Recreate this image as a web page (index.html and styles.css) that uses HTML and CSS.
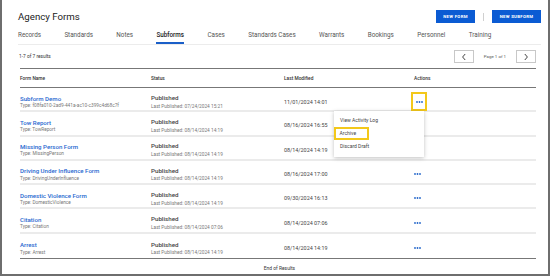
FILE: index.html
```html
<!DOCTYPE html>
<html>
<head>
<meta charset="utf-8">
<link rel="stylesheet" href="styles.css">
</head>
<body>
<div class="frame">
  <header class="top">
    <h1 class="title">Agency Forms</h1>
    <div class="btns">
      <button class="btn b1">NEW FORM</button>
      <span class="sep"></span>
      <button class="btn b2">NEW SUBFORM</button>
    </div>
  </header>
  <nav class="tabs">
    <span class="tab">Records</span>
    <span class="tab">Standards</span>
    <span class="tab">Notes</span>
    <span class="tab active">Subforms</span>
    <span class="tab">Cases</span>
    <span class="tab">Standards Cases</span>
    <span class="tab">Warrants</span>
    <span class="tab">Bookings</span>
    <span class="tab">Personnel</span>
    <span class="tab">Training</span>
  </nav>
  <div class="bar">
    <span class="count">1-7 of 7 results</span>
    <div class="pager">
      <span class="pbtn"><svg width="8" height="8" viewBox="0 0 8 8"><path d="M5.2 1 L2.6 4 L5.2 7" fill="none" stroke="#444" stroke-width="1"/></svg></span>
      <span class="ptext">Page 1 of 1</span>
      <span class="pbtn"><svg width="8" height="8" viewBox="0 0 8 8"><path d="M2.8 1 L5.4 4 L2.8 7" fill="none" stroke="#444" stroke-width="1"/></svg></span>
    </div>
  </div>
  <div class="table">
    <div class="row head">
      <span>Form Name</span><span>Status</span><span>Last Modified</span><span>Actions</span>
    </div>
    <div class="row">
      <div><div class="name">Subform Demo</div><div class="sub">Type: f08fa010-2ad9-441a-ac10-c399c4d68c7f</div></div>
      <div><div class="st">Published</div><div class="sub">Last Published: 07/24/2024 15:21</div></div>
      <div class="mod">11/01/2024 14:01</div>
      <div class="act">
        <span class="dotsbox"><svg class="dots" width="7" height="2" viewBox="0 0 7 2"><circle cx="1" cy="1" r="0.9"/><circle cx="3.5" cy="1" r="0.9"/><circle cx="6" cy="1" r="0.9"/></svg></span>
        <div class="menu">
          <div class="mi">View Activity Log</div>
          <div class="mi sel">Archive</div>
          <div class="mi">Discard Draft</div>
        </div>
      </div>
    </div>
    <div class="row">
      <div><div class="name">Tow Report</div><div class="sub">Type: TowReport</div></div>
      <div><div class="st">Published</div><div class="sub">Last Published: 08/14/2024 14:19</div></div>
      <div class="mod">08/16/2024 16:55</div>
      <div class="act"><svg class="dots" width="7" height="2" viewBox="0 0 7 2"><circle cx="1" cy="1" r="0.9"/><circle cx="3.5" cy="1" r="0.9"/><circle cx="6" cy="1" r="0.9"/></svg></div>
    </div>
    <div class="row">
      <div><div class="name">Missing Person Form</div><div class="sub">Type: MissingPerson</div></div>
      <div><div class="st">Published</div><div class="sub">Last Published: 08/14/2024 14:19</div></div>
      <div class="mod">08/14/2024 14:19</div>
      <div class="act"><svg class="dots" width="7" height="2" viewBox="0 0 7 2"><circle cx="1" cy="1" r="0.9"/><circle cx="3.5" cy="1" r="0.9"/><circle cx="6" cy="1" r="0.9"/></svg></div>
    </div>
    <div class="row">
      <div><div class="name">Driving Under Influence Form</div><div class="sub">Type: DrivingUnderInfluence</div></div>
      <div><div class="st">Published</div><div class="sub">Last Published: 08/14/2024 14:19</div></div>
      <div class="mod">08/16/2024 17:00</div>
      <div class="act"><svg class="dots" width="7" height="2" viewBox="0 0 7 2"><circle cx="1" cy="1" r="0.9"/><circle cx="3.5" cy="1" r="0.9"/><circle cx="6" cy="1" r="0.9"/></svg></div>
    </div>
    <div class="row">
      <div><div class="name">Domestic Violence Form</div><div class="sub">Type: DomesticViolence</div></div>
      <div><div class="st">Published</div><div class="sub">Last Published: 08/14/2024 14:19</div></div>
      <div class="mod">09/30/2024 16:13</div>
      <div class="act"><svg class="dots" width="7" height="2" viewBox="0 0 7 2"><circle cx="1" cy="1" r="0.9"/><circle cx="3.5" cy="1" r="0.9"/><circle cx="6" cy="1" r="0.9"/></svg></div>
    </div>
    <div class="row">
      <div><div class="name">Citation</div><div class="sub">Type: Citation</div></div>
      <div><div class="st">Published</div><div class="sub">Last Published: 08/14/2024 07:06</div></div>
      <div class="mod">08/14/2024 07:06</div>
      <div class="act"><svg class="dots" width="7" height="2" viewBox="0 0 7 2"><circle cx="1" cy="1" r="0.9"/><circle cx="3.5" cy="1" r="0.9"/><circle cx="6" cy="1" r="0.9"/></svg></div>
    </div>
    <div class="row last">
      <div><div class="name">Arrest</div><div class="sub">Type: Arrest</div></div>
      <div><div class="st">Published</div><div class="sub">Last Published: 08/14/2024 14:19</div></div>
      <div class="mod">08/14/2024 14:19</div>
      <div class="act"><svg class="dots" width="7" height="2" viewBox="0 0 7 2"><circle cx="1" cy="1" r="0.9"/><circle cx="3.5" cy="1" r="0.9"/><circle cx="6" cy="1" r="0.9"/></svg></div>
    </div>
  </div>
  <div class="end">End of Results</div>
</div>
</body>
</html>
```
FILE: styles.css
```css
* { box-sizing: border-box; }
html, body { margin: 0; padding: 0; background: #fff; }
body { font-family: Roboto, "Liberation Sans", sans-serif; color: #333; }
.frame {
  width: 550px; height: 276px;
  border-left: 2px solid #6e6e6e;
  border-right: 2px solid #6e6e6e;
  border-bottom: 2px solid #6e6e6e;
  padding: 0 7px 0 16px;
  overflow: hidden;
}
.top { display: flex; justify-content: space-between; align-items: center; height: 28px; padding-top: 5px; }
.title { font-size: 9.7px; font-weight: 400; margin: 0; color: #222; }
.btns { display: flex; align-items: center; }
.btn {
  background: #0b5bd3; color: #fff; border: 0; font-family: inherit;
  font-size: 4.3px; font-weight: 700; letter-spacing: 0.3px; white-space: nowrap;
  height: 13px; padding: 0; margin: 0; display: flex; align-items: center; justify-content: center;
}
.b1 { width: 39px; }
.b2 { width: 49px; }
.sep { width: 1px; height: 8px; background: #d0d0d0; margin: 0 8px; }
.tabs { display: flex; gap: 23.4px; height: 17px; border-bottom: 1px solid #ececec; }
.tab { font-size: 6.3px; color: #555; padding-top: 3px; height: 16px; }
.tab.active { color: #222; font-weight: 500; border-bottom: 2px solid #1a5fc8; }
.bar { display: flex; justify-content: space-between; align-items: center; height: 23px; padding-right: 5px; padding-left: 1px; }
.count { font-size: 4.8px; color: #333; }
.pager { display: flex; align-items: center; }
.pbtn { width: 20px; height: 13px; border: 1px solid #c8c8c8; display: flex; align-items: center; justify-content: center; }
.ptext { font-size: 4.4px; color: #555; margin: 0 10px; }
.table { margin-left: 2px; margin-right: 5px; border-top: 1.5px solid #777; border-bottom: 1.5px solid #777; }
.row {
  display: grid; grid-template-columns: 131px 133px 130px 1fr;
  height: 24.3px; padding-top: 4px; align-items: center; border-bottom: 2px solid #ebebeb;
}
.row.last { border-bottom: 0; }
.row.head { height: 19px; padding-top: 0; border-bottom: 1.5px solid #777; font-size: 4.8px; color: #333; font-weight: 500; }
.name { font-size: 6.1px; font-weight: 500; color: #1f68d0; }
.st { font-size: 6.2px; font-weight: 500; color: #444; }
.sub { font-size: 4.75px; color: #777; margin-top: 1.5px; }
.mod { font-size: 5.4px; color: #444; }
.act { position: relative; display: flex; align-items: center; }
.dots { fill: #2265c9; display: block; }
.dotsbox {
  width: 16px; height: 19px; border: 2.5px solid #f3c81a; margin-left: -3px;
  display: flex; align-items: center; justify-content: center;
}
.menu {
  position: absolute; left: -80px; top: 19px; width: 90px;
  background: #fff; box-shadow: 0 1px 4px rgba(0,0,0,0.25);
  padding: 3px 0 4px 0; z-index: 5;
}
.mi { font-size: 5px; color: #444; height: 13px; line-height: 13px; padding-left: 6px; }
.mi.sel { border: 2.5px solid #f3c81a; width: 35px; line-height: 8px; padding-left: 3.5px; }
.end { text-align: center; font-size: 4.9px; color: #333; padding-top: 6px; }
```
